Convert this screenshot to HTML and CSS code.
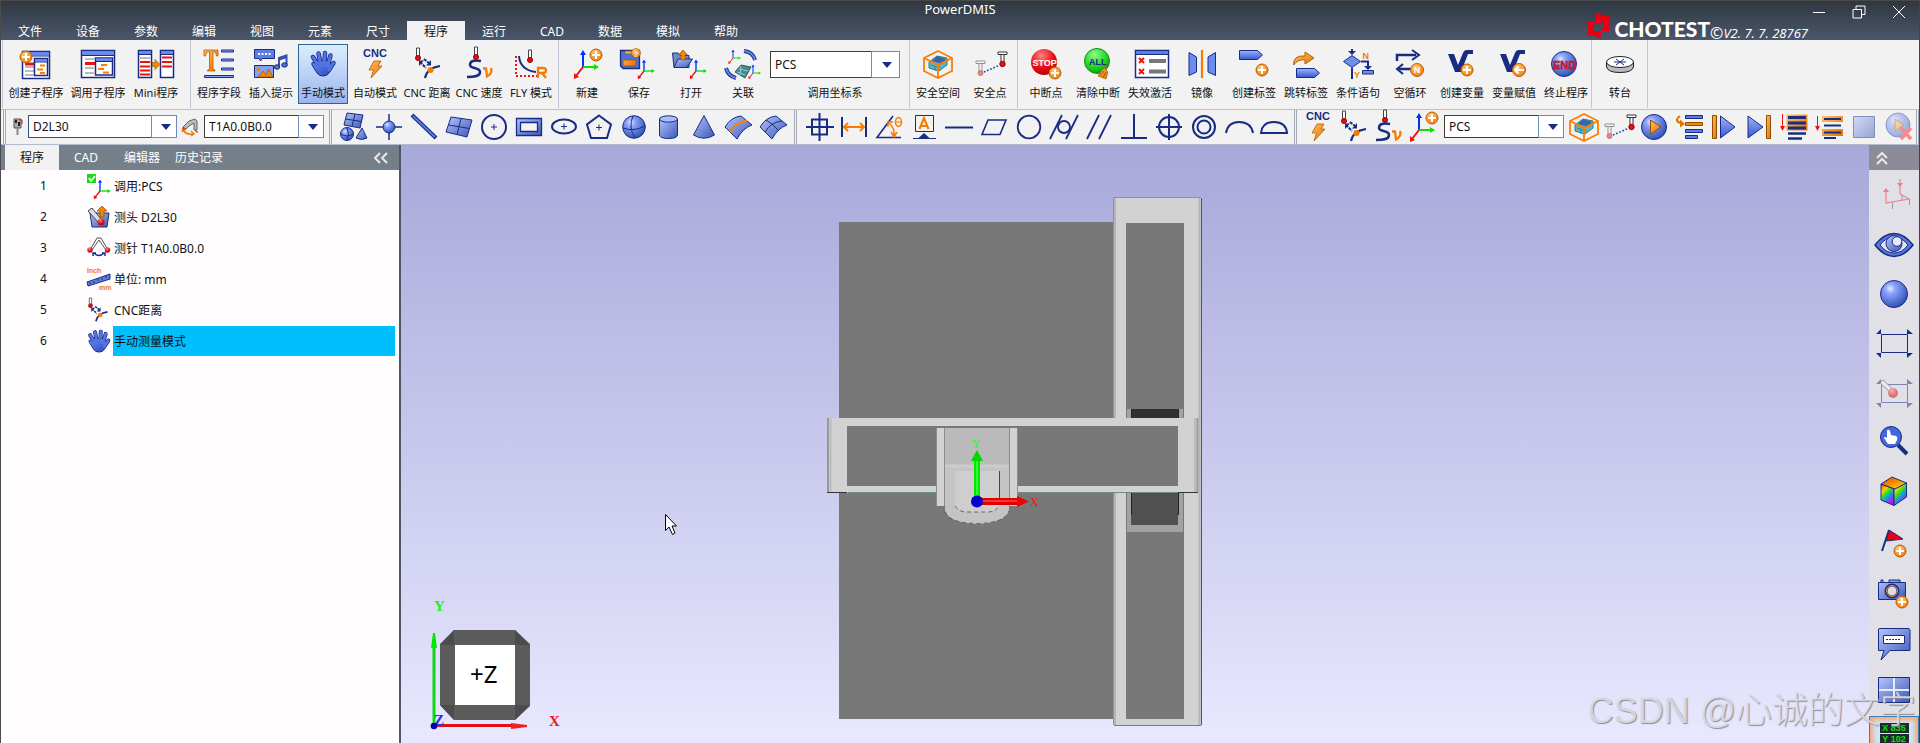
FILE: index.html
```html
<!DOCTYPE html>
<html lang="zh-CN">
<head>
<meta charset="utf-8">
<title>PowerDMIS</title>
<link rel="stylesheet" href="styles.css">
</head>
<body>
<svg class="defs" aria-hidden="true">
<defs>
<linearGradient id="blue" x1="0" y1="0" x2="1" y2="1"><stop offset="0" stop-color="#b4c4fc"/><stop offset="1" stop-color="#3c58b8"/></linearGradient>
<linearGradient id="bar" x1="0" y1="0" x2="0" y2="1"><stop offset="0" stop-color="#4a68d8"/><stop offset="1" stop-color="#a4b8ff"/></linearGradient>
<linearGradient id="down" x1="0" y1="0" x2="0" y2="1"><stop offset="0" stop-color="#a0b4f8"/><stop offset="1" stop-color="#3458d0"/></linearGradient>
<linearGradient id="handfill" x1="0" y1="0" x2="1" y2="1"><stop offset="0" stop-color="#6c8cf4"/><stop offset="1" stop-color="#2848b8"/></linearGradient>
<linearGradient id="org" x1="0" y1="0" x2="1" y2="1"><stop offset="0" stop-color="#ffc060"/><stop offset="1" stop-color="#e87000"/></linearGradient>
<radialGradient id="ball" cx=".36" cy=".3" r=".75"><stop offset="0" stop-color="#e4ecff"/><stop offset=".25" stop-color="#8ca4fc"/><stop offset="1" stop-color="#2c4cb0"/></radialGradient>
<radialGradient id="oball" cx=".4" cy=".3" r=".8"><stop offset="0" stop-color="#ffc878"/><stop offset="1" stop-color="#f07400"/></radialGradient>
<radialGradient id="rball" cx=".4" cy=".25" r=".8"><stop offset="0" stop-color="#ff8080"/><stop offset=".6" stop-color="#e80c14"/><stop offset="1" stop-color="#b00008"/></radialGradient>
<radialGradient id="gball" cx=".4" cy=".25" r=".8"><stop offset="0" stop-color="#90f890"/><stop offset=".6" stop-color="#20d820"/><stop offset="1" stop-color="#109010"/></radialGradient>
<linearGradient id="rainbow" x1="0" y1="0" x2=".6" y2="1"><stop offset="0" stop-color="#ff3800"/><stop offset=".3" stop-color="#ffd000"/><stop offset=".5" stop-color="#30e020"/><stop offset=".7" stop-color="#1890f0"/><stop offset="1" stop-color="#e000f0"/></linearGradient>
<linearGradient id="orangetop" x1="0" y1="0" x2="1" y2="1"><stop offset="0" stop-color="#ff3000"/><stop offset="1" stop-color="#f0f000"/></linearGradient>

<g id="plus"><circle r="6" fill="url(#oball)" stroke="#b86000"/><path d="M-4 0H4M0-4V4" stroke="#fff" stroke-width="2"/></g>
<g id="axes"><path d="M0 0V-13" stroke="#0030ff" stroke-width="2"/><path d="M-3-12 0-17 3-12Z" fill="#0030ff"/><path d="M0 0H12" stroke="#10e000" stroke-width="2"/><path d="M11-3 16 0 11 3Z" fill="#10e000"/><path d="M0 0-7 9" stroke="#f01010" stroke-width="2"/><path d="M-9 12-9 6-4 10Z" fill="#f01010"/></g>
<g id="probe"><path d="M-1.500-8H1.500V1H-1.500Z" fill="#fff" stroke="#444"/><circle cy="2" r="2.500" fill="#e80c14" stroke="#900"/></g>
<g id="winframe" fill="none"><path d="M.5.500H27.500V27.500H.5Z" fill="#fff" stroke="#182c84" stroke-width="1.500"/><path d="M1 1H27V4.500H1Z" fill="#6c88ec"/><path d="M1 5H27" stroke="#182c84"/></g>
<g id="miniwin"><path d="M.5.500H13.500V17.500H.5Z" fill="#fff" stroke="#182c84" stroke-width="1.500"/><path d="M1 1H13V3.500H1Z" fill="#6c88ec"/><path d="M1 4H13" stroke="#182c84"/><path d="M6 7.500H11M3 11.500H9M6 15H11" stroke="#ff7c00" stroke-width="2"/></g>

<g id="newsub"><use href="#winframe" x="2" y="3"/><path d="M5 19H14M5 23H14M5 27H14" stroke="#bbb" stroke-width="2"/><path d="M5 16H14" stroke="#f01010" stroke-width="3"/><use href="#miniwin" x="14" y="10"/><use href="#plus" x="6" y="9"/></g>
<g id="callsub"><path d="M-.5 2.500H32.500V29.500H-.5Z" fill="#fff" stroke="#182c84" stroke-width="1.500"/><path d="M0 3H32V7H0Z" fill="#6c88ec"/><path d="M0 7.500H32" stroke="#182c84"/><path d="M3 11H12M3 20H12M3 25H12" stroke="#bbb" stroke-width="2"/><path d="M3 15.500H13" stroke="#f01010" stroke-width="3"/><g transform="translate(13 9.500)"><path d="M.5.500H17.500V17.500H.5Z" fill="#fff" stroke="#182c84" stroke-width="1.500"/><path d="M1 1H17V3.500H1Z" fill="#6c88ec"/><path d="M1 4H17" stroke="#182c84"/><path d="M6 7.500H12M3 11.500H9M8 15H14" stroke="#ff7c00" stroke-width="2"/></g></g>
<g id="mini"><path d="M-1.500 2.500H11.500V29.500H-1.500ZM20.500 2.500H33.500V29.500H20.500Z" fill="#fff" stroke="#182c84" stroke-width="1.500"/><path d="M-1 3H11V6H-1ZM21 3H33V6H21Z" fill="#6c88ec"/><path d="M-1 6.500H11M21 6.500H33" stroke="#182c84"/><path d="M0 14H10M0 18.500H10M0 22.500H10M0 26.500H10M22 9.500H32M22 14H32M22 18.500H32" stroke="#f01010" stroke-width="2"/><path d="M0 10H10" stroke="#bbb" stroke-width="2"/><path d="M12.500 14.500H15V11.500L20 16.500 15 21.500V18.500H12.500Z" fill="#f08800" stroke="#a85800" stroke-width=".7"/></g>
<g id="textfield"><path d="M1 2H15V8H13.500L12.500 4H10V21L12 22V23H4.500V22L6.500 21V4H3.500L2.500 8H1Z" fill="url(#org)" stroke="#b86000" stroke-width=".8"/><path d="M18.500 2H30.500V4H18.500ZM18.500 11H30.500V13H18.500ZM18.500 20H30.500V22H18.500ZM1.500 27.500H30.500V29.500H1.500Z" fill="#8ca4fc" stroke="#182c84"/></g>
<g id="prompt"><path d="M-.5 1.500H19.500V10.500H7L5.500 13 4 10.500H-.5Z" fill="#5c7ce8" stroke="#182c84"/><path d="M3 6H16" stroke="#fff" stroke-width="2" stroke-dasharray="2 1.500"/><path d="M-.5 17.500H18.500V29.500H-.5Z" fill="#86a0f4" stroke="#182c84"/><path d="M3 29 8 23 11 27 13.500 21 18 29Z" fill="#f08800" stroke="#904c00" stroke-width=".6"/><circle cx="3.500" cy="21.500" r="2" fill="#f08800"/><path d="M24 18V10L31.500 7.500V16" fill="none" stroke="#3450b0" stroke-width="2"/><path d="M24 11 31.500 8.500" stroke="#3450b0" stroke-width="3"/><ellipse cx="22" cy="19" rx="2.800" ry="2.200" fill="#5070d8" stroke="#182c84"/><ellipse cx="29.500" cy="17" rx="2.800" ry="2.200" fill="#5070d8" stroke="#182c84"/></g>
<g id="hand" stroke-linecap="round" stroke-linejoin="round"><path d="M11 17 6 9M13.500 15 11.500 5.500M17.500 15 18 5M21 16 23.500 7.500M22 22 26.500 15" stroke="#182c84" stroke-width="4.500"/><path d="M7 15Q4 13 5 17L10 25Q12 28 16 28 20 28 22 25L25 19 22 13H10Z" fill="url(#handfill)" stroke="#182c84"/><path d="M11 17 6 9M13.500 15 11.500 5.500M17.500 15 18 5M21 16 23.500 7.500M22 22 26.500 15" stroke="#5474e4" stroke-width="3"/><path d="M9 18Q14 14 21 17" stroke="#5474e4" stroke-width="5" fill="none"/></g>
<g id="cnc"><text x="4" y="9" class="t-cnc">CNC</text><path d="M15 13H22L19 18H23L12 30 14.500 22H10Z" fill="url(#org)" stroke="#b86000" stroke-width=".8"/></g>
<g id="dist" fill="none"><use href="#probe" x="7" y="8"/><path d="M14 30Q16 20 29 18" stroke="#182c84" stroke-width="2.200"/><path d="M9 14 15 20M13 11 18 15" stroke="#182c84" stroke-width="2" stroke-dasharray="3 1"/><path d="M8 12.500H13L8 18ZM20 12V17.500H15Z" fill="#182c84"/><circle cx="19.500" cy="22" r="3" fill="#f57c00"/></g>
<g id="speed" fill="none"><use href="#probe" x="13" y="7"/><path d="M18 13Q7 11 7 17C7 21 17 19 17 24 17 29 10 29 4 29" stroke="#182c84" stroke-width="2.500"/><path d="M20 20.500H23L24 28.500Q30 25 28 20" stroke="#f57c00" stroke-width="2.300"/></g>
<g id="fly" fill="none"><path d="M1 8V28H23" stroke="#f01010" stroke-width="2" stroke-dasharray="2 2"/><path d="M4 8Q5 22 21 24" stroke="#182c84" stroke-width="2"/><use href="#probe" x="15" y="10"/><path d="M23 30V20H28Q31 20 31 22.500 31 25 28 25H24M27 25 31 30" stroke="#f57c00" stroke-width="2.300"/></g>
<g id="newcs"><use href="#axes" x="12" y="19"/><use href="#plus" x="25" y="7"/></g>
<g id="savecs"><path d="M-2.500 2.500H16.500V20.500H0L-2.500 18Z" fill="#5070d8" stroke="#182c84" stroke-width="1.300"/><path d="M2 3H11V6H2ZM0 12H13V18H0Z" fill="url(#org)" stroke="#904c00" stroke-width=".7"/><circle cx="13" cy="5" r="4.500" fill="url(#oball)" stroke="#b86000" stroke-width=".6"/><text x="10.500" y="8.500" class="t-mini white">?</text><use href="#axes" transform="translate(21 23) scale(.68)"/></g>
<g id="opencs"><path d="M-2.500 5H3L5 7.500H14V19.500H-1Z" fill="#7088c8" stroke="#182c84"/><path d="M-1 19.500 3 11H17.500L12 19.500Z" fill="url(#blue)" stroke="#182c84"/><path d="M6 12V7H3.500L8 2 12.500 7H10V12Z" fill="#f08800" stroke="#a05000" stroke-width=".7"/><use href="#axes" transform="translate(21 23) scale(.68)"/></g>
<g id="link" fill="none"><use href="#axes" transform="translate(6 10) scale(.5)"/><path d="M17 3Q26 4 28 12M-1 20Q1 28 9 30" stroke="#182c84" stroke-width="4"/><path d="M17 3Q26 4 28 12M-1 20Q1 28 9 30" stroke="#6484e4" stroke-width="2"/><path d="M8 24 14 17 24 19 18 30Z" fill="#488890" stroke="#286068"/><path d="M12 21 21 23M10 24 18 27M14 18 13 27" stroke="#90d0d0"/><use href="#axes" transform="translate(26 25) scale(.5)"/></g>
<g id="space" fill="none"><path d="M7 20V14L15 8 25 10V17L17 23Z" fill="#60b4b8" stroke="#208090"/><path d="M10 13 15 8 24 11 20 16Z" fill="#3c64a8"/><path d="M9 17 18 20M13 19V23" stroke="#30889c"/><path d="M16 3 30 10V23L16 30 2 23V10ZM2 10 16 17 30 10M16 17V30" stroke="#ff7c00" stroke-width="1.800"/></g>
<g id="safept" fill="none"><g opacity=".5"><path d="M2 13H11V15.500H2ZM5 15.500H8V23H5Z" fill="#fff" stroke="#333"/><circle cx="6.500" cy="25" r="2.500" fill="#e81018" stroke="#900"/></g><path d="M24 4H33V6.500H24ZM27 6.500H30V14H27Z" fill="#fff" stroke="#333"/><circle cx="28.500" cy="16" r="2.700" fill="#e81018" stroke="#900"/><path d="M10 24 25 17.500" stroke="#2038c0" stroke-width="1.600" stroke-dasharray="1.600 1.800"/></g>
<g id="stop"><circle cx="14" cy="14" r="13" fill="url(#rball)"/><text x="2.500" y="17.500" class="t-stop white">STOP</text><use href="#plus" x="25" y="25"/></g>
<g id="all"><circle cx="15" cy="13" r="12.500" fill="url(#gball)" stroke="#109010"/><text x="7" y="16.500" class="t-stop navy">ALL</text><path d="M26 17 23 21 26 24 24 31 16 28 20 22Z" fill="url(#org)" stroke="#a05800" stroke-width=".7"/><path d="M18 28 22 23M21 29.500 24 24" stroke="#a05800"/></g>
<g id="disable"><path d="M1.500 2.500H34.500V29.500H1.500Z" fill="#fff" stroke="#182c84" stroke-width="1.500"/><path d="M2 3H34V6H2Z" fill="#5c7ce8"/><path d="M2 6.500H34" stroke="#182c84"/><path d="M5 10 10 15M10 10 5 15M5 21 10 26M10 21 5 26" stroke="#f01010" stroke-width="2"/><path d="M15 13H32M15 23.500H32" stroke="#777" stroke-width="4"/></g>
<g id="mirror"><path d="M3 4.500 10.500 9V24L3 27.500ZM29.500 4.500 22 9V24L29.500 27.500Z" fill="#6c8cf0" stroke="#182c84"/><path d="M16 2V30" stroke="#f57c00" stroke-width="2.200"/></g>
<g id="label"><path d="M1.500 2.500H19.500L24.500 7 19.500 11.500H1.500Z" fill="url(#down)" stroke="#182c84"/><use href="#plus" x="24" y="22"/></g>
<g id="jump"><path d="M3.500 17Q3 7 15 8V4L24 10 15 16V12Q8 11 3.500 17Z" fill="url(#org)" stroke="#b06000"/><path d="M6.500 20.500H24.500L29.500 25 24.500 29.500H6.500Z" fill="url(#down)" stroke="#182c84"/></g>
<g id="cond" fill="none"><path d="M10 1V4" stroke="#182c84" stroke-width="2"/><path d="M6 3H14L10 7ZM22 18H30L26 22Z" fill="#182c84"/><path d="M10 20V31M19 13.500H26V19" stroke="#182c84" stroke-width="2"/><path d="M10 7.500 18.500 13.500 10 19.500 1.500 13.500ZM20.500 22.500H31.500V26H20.500Z" fill="#7090e8" stroke="#182c84"/><text x="20.500" y="11" class="t-let">N</text><text x="12" y="29.500" class="t-let">Y</text></g>
<g id="loop" fill="none"><path d="M3 13V7H22M18 21H5" stroke="#182c84" stroke-width="2.500"/><path d="M18 2 25 7 18 12M9 16 3 21 9 26" stroke="#182c84" stroke-width="2"/><circle cx="23" cy="22" r="6.500" fill="url(#oball)" stroke="#b86000"/><text x="19.800" y="25.200" class="t-let white">N</text></g>
<g id="vee"><path d="M2 6H8L12 17 17 5Q18 2 21 2H27V6H22L15 24H9Z" fill="#182c84"/></g>
<g id="newvar"><use href="#vee"/><use href="#plus" x="21" y="22"/></g>
<g id="setvar"><use href="#vee"/><circle cx="21" cy="22" r="6.500" fill="url(#oball)" stroke="#b86000"/><path d="M17 22H26M20.500 18.500 17 22 20.500 25.500" fill="none" stroke="#fff" stroke-width="2"/></g>
<g id="end"><circle cx="14" cy="16" r="12.500" fill="url(#ball)" stroke="#182c84"/><text x="3" y="20.500" class="t-end">END</text></g>
<g id="turn"><path d="M2.500 14V19Q4 24.500 16 24.500 28 24.500 29.500 19V14" fill="#bbb" stroke="#222"/><ellipse cx="16" cy="14" rx="13.500" ry="5.500" fill="#fff" stroke="#222"/><path d="M10 14H22M12 11 20 17M20 11 12 17" stroke="#182c84"/></g>

<g id="multi"><path d="M9 2 25 4 22 17 6 14Z" fill="url(#blue)" stroke="#182c84"/><path d="M17 3 14 15.500M7.500 8 23.500 10.500" stroke="#182c84"/><circle cx="9" cy="23" r="6.500" fill="url(#ball)" stroke="#182c84"/><path d="M3 23Q9 27 15 23M9 17Q12 23 9 29" fill="none" stroke="#182c84"/><path d="M24 17 29 27Q24 30 18 27Z" fill="url(#blue)" stroke="#182c84"/></g>
<g id="point"><path d="M3 16H29M16 3V29" stroke="#182c84" stroke-width="1.500"/><circle cx="16" cy="16" r="6" fill="url(#ball)" stroke="#182c84"/></g>
<g id="line"><path d="M4 4 28 27" stroke="#182c84" stroke-width="4"/><path d="M5 5 27 26" stroke="#5878e0" stroke-width="2"/></g>
<g id="plane"><path d="M8 6 29 9 24 26 3 21Z" fill="url(#blue)" stroke="#182c84"/><path d="M18 7.500 14 24M5.500 14 26.500 17.500" stroke="#182c84"/></g>
<g id="circle" fill="none" stroke="#182c84"><circle cx="16" cy="16" r="12" stroke-width="2"/><path d="M13 16H19M16 13V19"/></g>
<g id="rect"><path d="M3.500 7.500H28.500V24.500H3.500ZM7.500 11.500V20.500H24.500V11.500Z" fill="url(#blue)" stroke="#182c84" stroke-width="1.300"/></g>
<g id="ellipse" fill="none" stroke="#182c84"><ellipse cx="16" cy="15.500" rx="12" ry="7" stroke-width="2"/><path d="M13 15.500H19M16 12.500V18.500"/></g>
<g id="penta" fill="none" stroke="#182c84"><path d="M16 4.500 28 13.500 24 27H8L4 13.500Z" stroke-width="2"/><path d="M13 16.500H19M16 13.500V19.500"/></g>
<g id="sphere"><circle cx="16" cy="16" r="11.300" fill="url(#ball)" stroke="#182c84"/><path d="M5 17Q16 21 27 15M15 5Q10 16 17 27" fill="none" stroke="#182c84"/></g>
<g id="cyl"><path d="M6.500 8V24Q7 27.500 15.500 27.500 24 27.500 24.500 24V8" fill="url(#blue)" stroke="#182c84"/><ellipse cx="15.500" cy="8" rx="9" ry="3.200" fill="#a8bcfc" stroke="#182c84"/></g>
<g id="cone"><path d="M16 4.500 26.500 24Q16 30.500 5.500 24Z" fill="url(#blue)" stroke="#182c84"/></g>
<g id="surf"><path d="M2 16Q8 6 18 5L29 14Q20 17 14 28Z" fill="url(#blue)" stroke="#182c84"/></g>
<g id="surf1"><use href="#surf"/><path d="M7 21Q13 11 24 10" fill="none" stroke="#ff8000" stroke-width="2"/></g>
<g id="surf2"><use href="#surf"/><path d="M7 21Q13 11 24 10M8 9Q14 12 20 19" fill="none" stroke="#182c84"/></g>
<g id="gpos" fill="none" stroke="#182c84" stroke-width="2"><path d="M3 16H31M16.500 2V30M9 8.500H24V23.500H9Z"/></g>
<g id="gdist" fill="none"><path d="M4 6V26M28 6V26" stroke="#182c84" stroke-width="2"/><path d="M6 16H26M10 12 6 16 10 20M22 12 26 16 22 20" stroke="#f57c00" stroke-width="2"/></g>
<g id="gang" fill="none"><path d="M20 5 4 26.500H28" stroke="#182c84" stroke-width="1.600"/><path d="M16 12Q22 17 21 25M15 16V11H20M18 21 21 26 24 21" stroke="#f57c00" stroke-width="1.500"/><ellipse cx="25.500" cy="11" rx="3" ry="4.500" stroke="#f57c00" stroke-width="1.500"/><path d="M23 11H28" stroke="#f57c00"/></g>
<g id="gdatum" fill="none"><path d="M7.500 4.500H25.500V20.500H7.500Z" stroke="#182c84"/><path d="M16 22 22 27.500H10Z" fill="#182c84"/><path d="M5 27.500H28" stroke="#182c84"/><path d="M11.500 18 16 7 20.500 18M13 15H19" stroke="#f57c00" stroke-width="2"/></g>
<g id="gline"><path d="M2 16.500H30" stroke="#182c84" stroke-width="2"/></g>
<g id="gpar"><path d="M10 9H28L22 23.500H4Z" fill="none" stroke="#182c84" stroke-width="1.600"/></g>
<g id="gcirc"><circle cx="16" cy="16" r="11.300" fill="none" stroke="#182c84" stroke-width="1.800"/></g>
<g id="gcyl" fill="none" stroke="#182c84" stroke-width="1.800"><circle cx="16" cy="16" r="6"/><path d="M2 28 14 4M18 28 30 4"/></g>
<g id="gparallel" fill="none" stroke="#182c84" stroke-width="1.800"><path d="M4 28 16 4M16 28 28 4"/></g>
<g id="gperp" fill="none" stroke="#182c84" stroke-width="2"><path d="M3 27H29M16 3V27"/></g>
<g id="gtp" fill="none" stroke="#182c84" stroke-width="2"><circle cx="16" cy="16" r="10"/><path d="M3 16H29M16 3V29"/></g>
<g id="gcon" fill="none" stroke="#182c84" stroke-width="2"><circle cx="16" cy="16" r="11"/><circle cx="16" cy="16" r="6.500"/></g>
<g id="garc"><path d="M3 22Q5 11 16 11 28 11 30 22" fill="none" stroke="#182c84" stroke-width="2"/></g>
<g id="ghalf"><path d="M3 22Q4 11 16 11 28 11 29 22Z" fill="none" stroke="#182c84" stroke-width="2"/></g>
<g id="play"><circle cx="16" cy="16" r="12.500" fill="url(#ball)" stroke="#182c84"/><path d="M12.500 9 23 16 12.500 23Z" fill="url(#org)" stroke="#904c00"/></g>
<g id="goto"><path d="M12.500 4.500H29.500V7.500H12.500ZM12.500 18.500H29.500V21.500H12.500ZM12.500 24.500H24.500V27.500H12.500Z" fill="#5c7ce8" stroke="#182c84"/><path d="M12.500 11.500H29.500V14.500H12.500Z" fill="#f08800" stroke="#904c00"/><path d="M7 5Q0 10 9 12.500" fill="none" stroke="#d87800" stroke-width="2"/><path d="M7 8.500 12 13 7 16.500Z" fill="#d87800"/></g>
<g id="stepin"><path d="M4.500 4.500H8.500V27.500H4.500Z" fill="url(#org)" stroke="#904c00"/><path d="M12.500 5 27 16 12.500 27Z" fill="url(#down)" stroke="#182c84"/></g>
<g id="stepend"><path d="M23.500 4.500H27.500V27.500H23.500Z" fill="url(#org)" stroke="#904c00"/><path d="M5 5 20 16 5 27Z" fill="url(#down)" stroke="#182c84"/></g>
<g id="list1"><path d="M8.500 3.500H29.500V19.500H8.500Z" fill="url(#org)"/><path d="M10 6.500H28M10 12H28M10 17H28" stroke="#182c84" stroke-width="3"/><path d="M10 22.500H28M10 27.500H24" stroke="#182c84" stroke-width="2.500"/><path d="M4.500 3V17" stroke="#f01010"/><path d="M2 15H7L4.500 20Z" fill="#f01010"/></g>
<g id="list2"><path d="M9 5H30V11H9ZM9 18H30V25H9Z" fill="url(#org)"/><path d="M11 8H28M11 14.500H28M11 21.500H28M11 27H23" stroke="#182c84" stroke-width="2"/><path d="M4.500 5V17" stroke="#f01010"/><path d="M2 15H7L4.500 20Z" fill="#f01010"/></g>
<g id="halt" opacity=".5"><path d="M5.500 5.500H26.500V26.500H5.500Z" fill="url(#blue)" stroke="#182c84"/></g>
<g id="noplay" opacity=".45"><circle cx="15" cy="14" r="12" fill="url(#ball)" stroke="#182c84"/><path d="M12 8 21 14 12 20Z" fill="url(#org)" stroke="#904c00"/><path d="M18 17 28 28M28 17 18 28" stroke="#ff1010" stroke-width="3.500"/></g>

<g id="corners"><path d="M7.500 9.500H33.500V27.500H7.500Z" fill="none" stroke="#182c84"/><path d="M7 4V9H2ZM33 4V9H39ZM7 33V28H2ZM33 33V28H39Z" fill="#182c84"/></g>
</defs>
</svg>

<div class="app">
<header class="top">
  <div class="titlebar">
    <h1 class="title">PowerDMIS</h1>
    <div class="winbtns">
      <button aria-label="最小化"><svg width="14" height="14"><path d="M1 7.500H13"/></svg></button>
      <button aria-label="还原"><svg width="14" height="14"><path d="M1 4.500H9.500V13H1ZM4 4V1H13V9.500H10"/></svg></button>
      <button aria-label="关闭"><svg width="14" height="14"><path d="M1 1 13 13M13 1 1 13"/></svg></button>
    </div>
  </div>
  <nav class="menu">
    <button>文件</button><button>设备</button><button>参数</button><button>编辑</button><button>视图</button><button>元素</button><button>尺寸</button><button class="on">程序</button><button>运行</button><button>CAD</button><button>数据</button><button>模拟</button><button>帮助</button>
  </nav>
  <div class="brand"><svg width="22" height="24"><path d="M8 0H13V9H5V17H13V24H8V22H0V7H8ZM14 2H21V17H14V13H16V8H14Z" fill="#e60012"/></svg><b>CHOTEST</b><span class="copy">©</span><i>V2. 7. 7. 28767</i></div>
</header>

<div class="ribbon">
  <div class="group wide">
    <button class="tool"><svg><use href="#newsub"/></svg>创建子程序</button>
    <button class="tool"><svg><use href="#callsub"/></svg>调用子程序</button>
    <button class="tool"><svg><use href="#mini"/></svg>Mini程序</button>
  </div>
  <div class="group">
    <button class="tool"><svg><use href="#textfield"/></svg>程序字段</button>
    <button class="tool"><svg><use href="#prompt"/></svg>插入提示</button>
    <button class="tool on"><svg><use href="#hand"/></svg>手动模式</button>
    <button class="tool"><svg><use href="#cnc"/></svg>自动模式</button>
    <button class="tool"><svg><use href="#dist"/></svg>CNC 距离</button>
    <button class="tool"><svg><use href="#speed"/></svg>CNC 速度</button>
    <button class="tool"><svg><use href="#fly"/></svg>FLY 模式</button>
  </div>
  <div class="group">
    <button class="tool"><svg><use href="#newcs"/></svg>新建</button>
    <button class="tool"><svg><use href="#savecs"/></svg>保存</button>
    <button class="tool"><svg><use href="#opencs"/></svg>打开</button>
    <button class="tool"><svg><use href="#link"/></svg>关联</button>
    <div class="field"><span class="combo"><select id="cs"><option>PCS</option></select></span><label for="cs">调用坐标系</label></div>
  </div>
  <div class="group">
    <button class="tool"><svg><use href="#space"/></svg>安全空间</button>
    <button class="tool"><svg><use href="#safept"/></svg>安全点</button>
  </div>
  <div class="group long">
    <button class="tool"><svg><use href="#stop"/></svg>中断点</button>
    <button class="tool"><svg><use href="#all"/></svg>清除中断</button>
    <button class="tool"><svg><use href="#disable"/></svg>失效激活</button>
    <button class="tool"><svg><use href="#mirror"/></svg>镜像</button>
    <button class="tool"><svg><use href="#label"/></svg>创建标签</button>
    <button class="tool"><svg><use href="#jump"/></svg>跳转标签</button>
    <button class="tool"><svg><use href="#cond"/></svg>条件语句</button>
    <button class="tool"><svg><use href="#loop"/></svg>空循环</button>
    <button class="tool"><svg><use href="#newvar"/></svg>创建变量</button>
    <button class="tool"><svg><use href="#setvar"/></svg>变量赋值</button>
    <button class="tool"><svg><use href="#end"/></svg>终止程序</button>
  </div>
  <div class="group">
    <button class="tool"><svg><use href="#turn"/></svg>转台</button>
  </div>
</div>

<div class="bars">
  <div class="strip probes">
    <svg width="12" height="18" viewBox="0 0 12 18"><path d="M2 1H9V10H2Z" fill="#aaa" stroke="#555"/><path d="M3 2H5V5H3ZM6 4H8V8H6Z" fill="#222"/><path d="M8 2H10V6" stroke="#d02020" fill="none"/><path d="M5.500 10V17" stroke="#888" stroke-width="2"/></svg>
    <span class="combo probe"><select aria-label="测头"><option>D2L30</option></select></span>
    <svg width="18" height="18" viewBox="0 0 18 18"><path d="M2 9 8 3 14 1 16 3V12H13V5L8 8 5 11Z" fill="#bbb" stroke="#666"/><path d="M2 12Q5 17 12 16M1 14 2 11 5 12M10 13 13 16 10 18" fill="none" stroke="#f57c00" stroke-width="1.500"/><path d="M1 10H3V12M14 13H16V15" stroke="#e01010" fill="none"/></svg>
    <span class="combo tip"><select aria-label="测针"><option>T1A0.0B0.0</option></select></span>
  </div>
  <div class="strip">
    <button aria-label="自动"><svg><use href="#multi"/></svg></button><button aria-label="点"><svg><use href="#point"/></svg></button><button aria-label="线"><svg><use href="#line"/></svg></button><button aria-label="面"><svg><use href="#plane"/></svg></button><button aria-label="圆"><svg><use href="#circle"/></svg></button><button aria-label="方槽"><svg><use href="#rect"/></svg></button><button aria-label="椭圆"><svg><use href="#ellipse"/></svg></button><button aria-label="多边形"><svg><use href="#penta"/></svg></button><button aria-label="球"><svg><use href="#sphere"/></svg></button><button aria-label="圆柱"><svg><use href="#cyl"/></svg></button><button aria-label="圆锥"><svg><use href="#cone"/></svg></button><button aria-label="曲线"><svg><use href="#surf1"/></svg></button><button aria-label="曲面"><svg><use href="#surf2"/></svg></button>
  </div>
  <div class="strip">
    <button aria-label="位置"><svg><use href="#gpos"/></svg></button><button aria-label="距离"><svg><use href="#gdist"/></svg></button><button aria-label="角度"><svg><use href="#gang"/></svg></button><button aria-label="基准"><svg><use href="#gdatum"/></svg></button><button aria-label="直线度"><svg><use href="#gline"/></svg></button><button aria-label="平面度"><svg><use href="#gpar"/></svg></button><button aria-label="圆度"><svg><use href="#gcirc"/></svg></button><button aria-label="圆柱度"><svg><use href="#gcyl"/></svg></button><button aria-label="平行度"><svg><use href="#gparallel"/></svg></button><button aria-label="垂直度"><svg><use href="#gperp"/></svg></button><button aria-label="位置度"><svg><use href="#gtp"/></svg></button><button aria-label="同心度"><svg><use href="#gcon"/></svg></button><button aria-label="线轮廓度"><svg><use href="#garc"/></svg></button><button aria-label="面轮廓度"><svg><use href="#ghalf"/></svg></button>
  </div>
  <div class="strip run">
    <button aria-label="自动模式"><svg><use href="#cnc"/></svg></button><button aria-label="CNC 距离"><svg><use href="#dist"/></svg></button><button aria-label="CNC 速度"><svg><use href="#speed"/></svg></button><button aria-label="新建坐标系"><svg><use href="#newcs"/></svg></button>
    <span class="combo tip"><select aria-label="坐标系"><option>PCS</option></select></span>
    <button aria-label="安全空间"><svg><use href="#space"/></svg></button><button aria-label="安全点"><svg><use href="#safept"/></svg></button><button aria-label="运行"><svg><use href="#play"/></svg></button><button aria-label="跳转"><svg><use href="#goto"/></svg></button><button aria-label="单步"><svg><use href="#stepin"/></svg></button><button aria-label="运行到末尾"><svg><use href="#stepend"/></svg></button><button aria-label="块运行"><svg><use href="#list1"/></svg></button><button aria-label="选择运行"><svg><use href="#list2"/></svg></button><button aria-label="停止" disabled><svg><use href="#halt"/></svg></button><button aria-label="取消" disabled><svg><use href="#noplay"/></svg></button>
  </div>
</div>

<main class="work">
  <aside class="panel">
    <div class="tabs"><button class="on">程序</button><button>CAD</button><button>编辑器</button><button class="hist">历史记录</button><button class="fold" aria-label="折叠"><svg width="16" height="12"><path d="M7 1 2 6 7 11M14 1 9 6 14 11"/></svg></button></div>
    <ol class="tree">
      <li><span class="num">1</span><svg viewBox="0 0 24 24"><path d="M0 0H9V9H0Z" fill="#10e010"/><path d="M2 4 4 7 8 2" fill="none" stroke="#fff" stroke-width="1.800"/><use href="#axes" transform="translate(13 17) scale(.68)"/></svg><span class="name">调用:PCS</span></li>
      <li><span class="num">2</span><svg viewBox="0 0 24 24"><path d="M3 8H22L20 22H5Z" fill="url(#blue)" stroke="#182c84"/><path d="M13 12V6H10L15 1 20 6H17V12Z" fill="#f08800" stroke="#a05000" stroke-width=".8"/><path d="M1 6 5 3 14 14 11 17Z" fill="#ddd" stroke="#444"/><circle cx="14" cy="17" r="3.500" fill="url(#rball)"/></svg><span class="name">测头 D2L30</span></li>
      <li><span class="num">3</span><svg viewBox="0 0 24 24" fill="none"><path d="M3 14 10 2H14L21 14M5 14 12 4 19 14" stroke="#555"/><path d="M7 17Q12 22 17 17M6 20V17H9M18 20V17H15" stroke="#182c84" stroke-width="1.500"/><circle cx="3" cy="14" r="2.700" fill="url(#rball)"/><circle cx="20.500" cy="14" r="2.700" fill="url(#rball)"/></svg><span class="name">测针 T1A0.0B0.0</span></li>
      <li><span class="num">4</span><svg viewBox="0 0 24 24"><text x="0" y="6" class="t-unit">Inch</text><path d="M0 15 23 7V12L1 19Z" fill="#6080d8" stroke="#182c84"/><path d="M3 15V17M7 14V16M11 12V14M15 11V13M19 9V11" stroke="#182c84"/><text x="12" y="23" class="t-unit">mm</text></svg><span class="name">单位: mm</span></li>
      <li><span class="num">5</span><svg viewBox="3 0 30 31"><use href="#dist"/></svg><span class="name">CNC距离</span></li>
      <li class="sel"><span class="num">6</span><svg viewBox="3 2 26 27"><use href="#hand"/></svg><span class="name">手动测量模式</span></li>
    </ol>
  </aside>

  <section class="view">
    <svg class="scene" viewBox="401 145 1468 598">
      <path d="M839 222H1114V719H839Z" fill="#787878"/>
      <path d="M1113 197H1202V725H1113Z" fill="#d2d2d2"/>
      <path d="M1126 223H1184V719H1126Z" fill="#787878"/>
      <path d="M1113.500 725V197.500H1201" fill="none" stroke="#929292"/><path d="M1115 198V725M1199.500 198V725" stroke="#b4b4b4" stroke-width="2"/><path d="M1201.500 198V725" stroke="#555"/><path d="M1114 725.500H1201" stroke="#7c7c7c"/>
      <path d="M1127 409H1183V418H1127ZM1127 493H1183V532H1127Z" fill="#a2a2a2"/><path d="M1131 409H1178V418H1131Z" fill="#303030"/><path d="M1131 493H1178V525H1131Z" fill="#505050"/><path d="M1131.500 409V515M1178.500 409V515" stroke="#222"/>
      <path d="M827 418H1199V492H1184V493H847V492H827ZM847 426V486H1178V426Z" fill="#d2d2d2" fill-rule="evenodd"/>
      <path d="M847 426H1178V486H847Z" fill="#787878"/><path d="M848 492.500H1178" stroke="#688c8c"/><path d="M827 492.500H847M1178 492.500H1198" stroke="#333"/><path d="M828 418V492M1197.500 418V492" stroke="#989898" stroke-width="2"/><path d="M830.500 418V492M1195 418V492" stroke="#bbb" stroke-width="2"/>
      <path d="M936 428H1018V506H936Z" fill="#d2d2d2"/><path d="M936.500 428V506M944.500 428V506M1009.500 428V506M1017.500 428V505" stroke="#8c8c8c"/>
      <path d="M945 428H1009V465H945Z" fill="#bababa"/><path d="M945 465H1009V510Q1006 523 977 524 948 523 945 510Z" fill="#c4c4c4"/><path d="M945 466H1009" stroke="#ccc" stroke-width="3"/>
      <path d="M955 471H999V508Q995 512 977 512 959 512 955 506Z" fill="#cecece"/><path d="M999.500 471V498" stroke="#444"/><path d="M955 506Q959 512 967 512H987Q996 512 999 506M945 512Q949 523 977 523.500 1005 523 1009 511" fill="none" stroke="#444" stroke-dasharray="4 3" stroke-width=".7"/>
      <path d="M977 500V460" stroke="#00e800" stroke-width="6"/><path d="M977 500V460" stroke="#70ff70"/><path d="M971 461 977 450 983 461Z" fill="#00d800"/>
      <path d="M982 501.500H1018" stroke="#e00000" stroke-width="7"/><path d="M982 501H1018" stroke="#ff7060"/><path d="M1017 496 1029 501.500 1017 507Z" fill="#f00000"/><circle cx="977" cy="501.500" r="6" fill="#0000d0"/>
      <text x="972" y="448" class="t-axis" fill="#20ff20">Y</text><text x="1030" y="506" class="t-axis" fill="#f01818">X</text>
      <path d="M454 630H515L530 644V706L515 720H454L440 705V644Z" fill="#5c5c5c"/><path d="M454 630V645H440ZM515 630V645H530ZM454 720V705H440ZM515 720V705H530Z" fill="#4c4c4c"/><path d="M455 645H515V705H455Z" fill="#fff"/>
      <text x="470" y="683" class="t-cube">+Z</text>
      <path d="M434 725V640" stroke="#10d810" stroke-width="3"/><path d="M431 648 433 633H435L437 648Z" fill="#00e800"/><path d="M434 725.500H515" stroke="#e01010" stroke-width="3"/><path d="M511 723 527 725V727L511 729Z" fill="#f02020"/>
      <text x="434" y="725" class="t-axisb" fill="#2030f0">Z</text><circle cx="434" cy="726" r="3.300" fill="#0000b0"/><text x="434" y="611" class="t-axisb" fill="#20f020">Y</text><text x="549" y="726" class="t-axisb" fill="#f01818">X</text>
      <path d="M665.500 514.500V530.500L669 527 672.500 534.500 675 533 672 526H676.500Z" fill="#fff" stroke="#000"/>
    </svg>
  </section>

  <aside class="side">
    <button class="sidehead" aria-label="折叠工具栏"><svg width="12" height="14"><path d="M1 7 6 2 11 7M1 13 6 8 11 13"/></svg></button>
    <button aria-label="路径"><svg fill="none"><path d="M12 16V28L35 24 26 19V4" stroke="#ee8088" stroke-width="1.200"/><path d="M9 17 12 13 15 17ZM23 8H29L26 12Z" fill="#ee8088"/><path d="M18.500 28V34M35.500 24V30M28 20V25" stroke="#8c98bc"/></svg></button>
    <button aria-label="显示"><svg><path d="M1 20Q10 8.500 20 8.500 30 8.500 39 20 30 31.500 20 31.500 10 31.500 1 20Z" fill="#5878d8" stroke="#182c84" stroke-width="1.500"/><path d="M6 20Q12 12 20 12 28 12 34 20 28 28 20 28 12 28 6 20Z" fill="#e4e4f0" stroke="#182c84"/><circle cx="20" cy="18.500" r="8" fill="url(#blue)" stroke="#182c84"/><circle cx="23" cy="16.500" r="4.800" fill="#e8e8f8" stroke="#182c84"/></svg></button>
    <button aria-label="实体"><svg><circle cx="20" cy="19" r="13.500" fill="url(#ball)" stroke="#182c84"/></svg></button>
    <button aria-label="适合窗口"><svg><use href="#corners"/></svg></button>
    <button aria-label="适合测头" disabled><svg opacity=".5"><use href="#corners"/><path d="M6 8 9 5 20 15 17 18Z" fill="#eee" stroke="#555"/><circle cx="19" cy="18" r="5" fill="url(#rball)"/></svg></button>
    <button aria-label="缩放"><svg><path d="M24 20 33 29" stroke="#182c84" stroke-width="4"/><circle cx="17" cy="12" r="10.500" fill="#4468dc" stroke="#182c84"/><path d="M13 5.500Q15 4 16 6L17 10 22 11Q24 12 23 15L21 19H14L10 13Q10 11 13 13Z" fill="#fff"/></svg></button>
    <button aria-label="颜色"><svg stroke="#182c84" stroke-linejoin="round"><path d="M7 9 20 14V30.500L7 25Z" fill="url(#rainbow)"/><path d="M20 14 32.500 8V22L20 30.500Z" fill="url(#rainbow)"/><path d="M7 9 18 2 32.500 8 21 14Z" fill="url(#orangetop)"/></svg></button>
    <button aria-label="标记"><svg><path d="M15 5 8 26" stroke="#182c84" stroke-width="2"/><path d="M15 5 29 14 12.500 16Z" fill="#f00010" stroke="#182c84"/><use href="#plus" x="26" y="26"/></svg></button>
    <button aria-label="截图"><svg><path d="M4.500 7.500H31.500V24.500H4.500ZM15 7V5H26V7M7 7V5H9V7" fill="url(#blue)" stroke="#182c84"/><circle cx="18" cy="16" r="6" fill="#ddd" stroke="#182c84" stroke-width="3"/><circle cx="18" cy="16" r="5.500" fill="none" stroke="#f09030"/><use href="#plus" x="28" y="27"/></svg></button>
    <button aria-label="注释"><svg><path d="M5 3.500H35L36 5V25.500H16L7 35 10 25.500H4.500V4Z" fill="url(#blue)" stroke="#182c84"/><path d="M9.500 10.500H30.500V18.500H9.500Z" fill="#fff" stroke="#182c84"/><path d="M12 14.500H27" stroke="#182c84" stroke-dasharray="2 1"/></svg></button>
    <button aria-label="分屏" class="short"><svg><path d="M4.500 4.500H35.500V29.500H4.500Z" fill="url(#blue)" stroke="#182c84"/><path d="M5 17H35M20 5V29" stroke="#e8ecf8" stroke-width="2"/></svg></button>
    <button class="coords"><span>X 835</span><span>Y 102</span></button>
  </aside>
  <div class="mark">CSDN @心诚的文字</div>
</main>
</div>
</body>
</html>
```
FILE: styles.css
```css
* { box-sizing: border-box; }
body { margin: 0; font: 12px/16px "Noto Sans", "Noto Sans CJK SC", sans-serif; color: #111; background: #f2f2f2; overflow: hidden; }
button { font: inherit; color: inherit; border: 0; padding: 0; background: none; white-space: nowrap; }
svg { display: block; flex: none; overflow: visible; }
.defs { position: absolute; width: 0; height: 0; }
.app { height: 100vh; display: flex; flex-direction: column; border-left: 1px solid #4a4a4a; border-right: 1px solid #3c4450; }

.top { position: relative; flex: none; background: linear-gradient(#2f3841, #4b566b); border-top: 1px solid #4a4a4a; color: #fff; }
.titlebar { display: flex; justify-content: center; height: 20px; }
.title { margin: 0; font-size: 13px; line-height: 17px; font-weight: 400; }
.winbtns { position: absolute; right: 13px; top: 4px; display: flex; gap: 26px; }
.winbtns path { fill: none; stroke: #fff; stroke-width: 1; }
.menu { display: flex; height: 19px; }
.menu button { width: 58px; height: 19px; line-height: 22px; }
.menu .on { background: #f2f2f2; color: #111; }
.brand { position: absolute; right: 111px; top: 14px; display: flex; align-items: flex-end; height: 26px; }
.brand svg { margin-bottom: 3px; }
.brand b { font: 900 21px/21px Lato, sans-serif; margin: 0 0 2px 4px; }
.brand .copy { font-size: 16px; line-height: 15px; }
.brand i { font-size: 13px; line-height: 16px; }

.ribbon { display: flex; flex: none; height: 70px; background: #f2f2f2; border-bottom: 1px solid #b8c2d2; padding-left: 1px; }
.group { display: flex; gap: 2px; padding: 4px 2px 0 3px; margin-bottom: 1px; border-right: 1px solid #c0c8d8; }
.group:first-child { border-left: 1px solid #c0c8d8; padding-right: 8px; }
.group.long { padding-right: 0; }
.tool { width: 50px; height: 60px; display: flex; flex-direction: column; align-items: center; gap: 5px; padding-top: 3px; font-size: 11px; line-height: 16px; border: 1px solid transparent; }
.tool svg { width: 32px; height: 32px; }
.wide .tool { width: 60px; }
.wide .tool:last-child { width: 52px; }
.tool.on { background: linear-gradient(#dceefc, #9ab4f0); border-color: #2c6496; }
.field { display: flex; flex-direction: column; align-items: center; gap: 7px; padding: 7px 7px 0 0; font-size: 11px; }
.combo { position: relative; display: block; width: 130px; height: 27px; }
.combo select { appearance: none; width: 100%; height: 100%; margin: 0; padding: 1px 0 0 4px; border: 1px solid #3c3c3c; border-radius: 0; background: #fff; font: inherit; font-size: 12px; color: #111; }
.combo::before { content: ""; position: absolute; top: 0; right: 0; bottom: 0; width: 27px; border: 1px solid #6c8cb8; pointer-events: none; }
.combo::after { content: ""; position: absolute; right: 8px; top: 50%; margin-top: -3px; border: 5px solid transparent; border-top: 6px solid #182c84; border-bottom: 0; pointer-events: none; }
.strip .combo::before { width: 24px; }
.strip .combo::after { right: 6px; }

.bars { display: flex; flex: none; height: 35px; background: #f2f2f2; border-bottom: 1px solid #b0bcd0; padding: 0 0 0 2px; }
.strip { display: flex; align-items: center; border-left: 3px double #a4a8b4; padding: 0 0 1px 5px; }
.strip button { width: 35px; height: 32px; display: flex; justify-content: center; }
.strip button svg { width: 32px; height: 32px; }
.strip .combo { height: 23px; }
.strip .probe { width: 149px; }
.strip .probe select { border-color: #2c4c8c; }
.strip .tip { width: 120px; }
.probes { gap: 4px; width: 326px; padding-left: 6px; }
.probes .tip { margin-left: 1px; }
.strip:nth-child(2) { width: 465px; padding-left: 4px; }
.strip:nth-child(3) { width: 500px; padding-left: 4px; }
.run { flex: 1; border-right: 3px double #a4a8b4; padding-left: 3px; }
.run .combo { margin: 0 2px 0 4px; }

.work { position: relative; display: flex; flex: 1; min-height: 0; }
.panel { width: 400px; flex: none; background: #fffdfd; border-right: 2px solid #4c5864; }
.tabs { display: flex; height: 25px; background: #757f89; color: #fff; padding-left: 4px; }
.tabs button { width: 54px; line-height: 26px; }
.tabs .on { background: #f2f2f2; color: #111; }
.tabs button:nth-child(3) { width: 58px; }
.tabs .hist { width: 56px; }
.tabs .fold { width: 16px; align-self: center; margin: 0 10px 0 auto; }
.tabs path, .sidehead path { fill: none; stroke: #e8e8e8; stroke-width: 2; }
.tree { list-style: none; margin: 1px 0 0; padding: 0; }
.tree li { display: flex; height: 30px; margin-bottom: 1px; align-items: center; }
.tree .num { width: 85px; text-align: center; }
.tree svg { width: 24px; height: 24px; margin: 0 2px 0 1px; }
.tree .name { flex: 1; margin-right: 4px; padding: 2px 0 0 1px; line-height: 28px; }
.tree .sel .name { background: #00bfff; }

.view { flex: 1; min-width: 0; background: linear-gradient(#a8a8da, #e8e8ff); }
.scene { width: 100%; height: 100%; }
.side { width: 50px; flex: none; background: #e0e0e6; display: flex; flex-direction: column; overflow: hidden; }
.side button { flex: none; height: 50px; display: flex; align-items: center; justify-content: center; }
.side button svg { width: 40px; height: 40px; }
.side .sidehead { height: 25px; background: #8c8c98; justify-content: flex-start; padding-left: 7px; }
.side .sidehead svg { width: 12px; height: 14px; }
.side .short { height: 46px; }
.side .coords { flex-direction: column; justify-content: flex-start; gap: 1px; padding-top: 6px; border: 1px solid #3a80b0; background: #c8e8fc; box-shadow: inset 0 0 5px 3px #ffa070; }
.coords span { width: 29px; height: 10px; background: #202830; color: #00e800; font: bold 9px/10px "Liberation Sans", sans-serif; text-align: center; }
.mark { position: absolute; right: 3px; bottom: 8px; font: 300 36px/48px "Liberation Sans", "Noto Sans CJK SC", sans-serif; color: rgba(225, 225, 232, .85); text-shadow: 1px 1px 1px #8c8c98; pointer-events: none; white-space: nowrap; }

.t-cnc { font: bold 11px "Liberation Sans", sans-serif; fill: #182c84; }
.t-stop { font: bold 9px "Liberation Sans", sans-serif; }
.t-let { font: bold 9px "Liberation Sans", sans-serif; fill: #f57c00; }
.t-mini { font: bold 8px "Liberation Sans", sans-serif; }
.t-end { font: bold 11px "Liberation Sans", sans-serif; fill: #f02030; stroke: #a00010; stroke-width: .4; }
.t-unit { font: bold 7px "Liberation Sans", sans-serif; fill: #f57c00; }
.t-axis { font: 12px "Liberation Serif", serif; }
.t-axisb { font: bold 15px "Liberation Serif", serif; }
.t-cube { font: 24px "Noto Sans", sans-serif; }
.t-mini.white, .t-stop.white, .t-let.white { fill: #fff; }
.navy { fill: #182c84; }
```
